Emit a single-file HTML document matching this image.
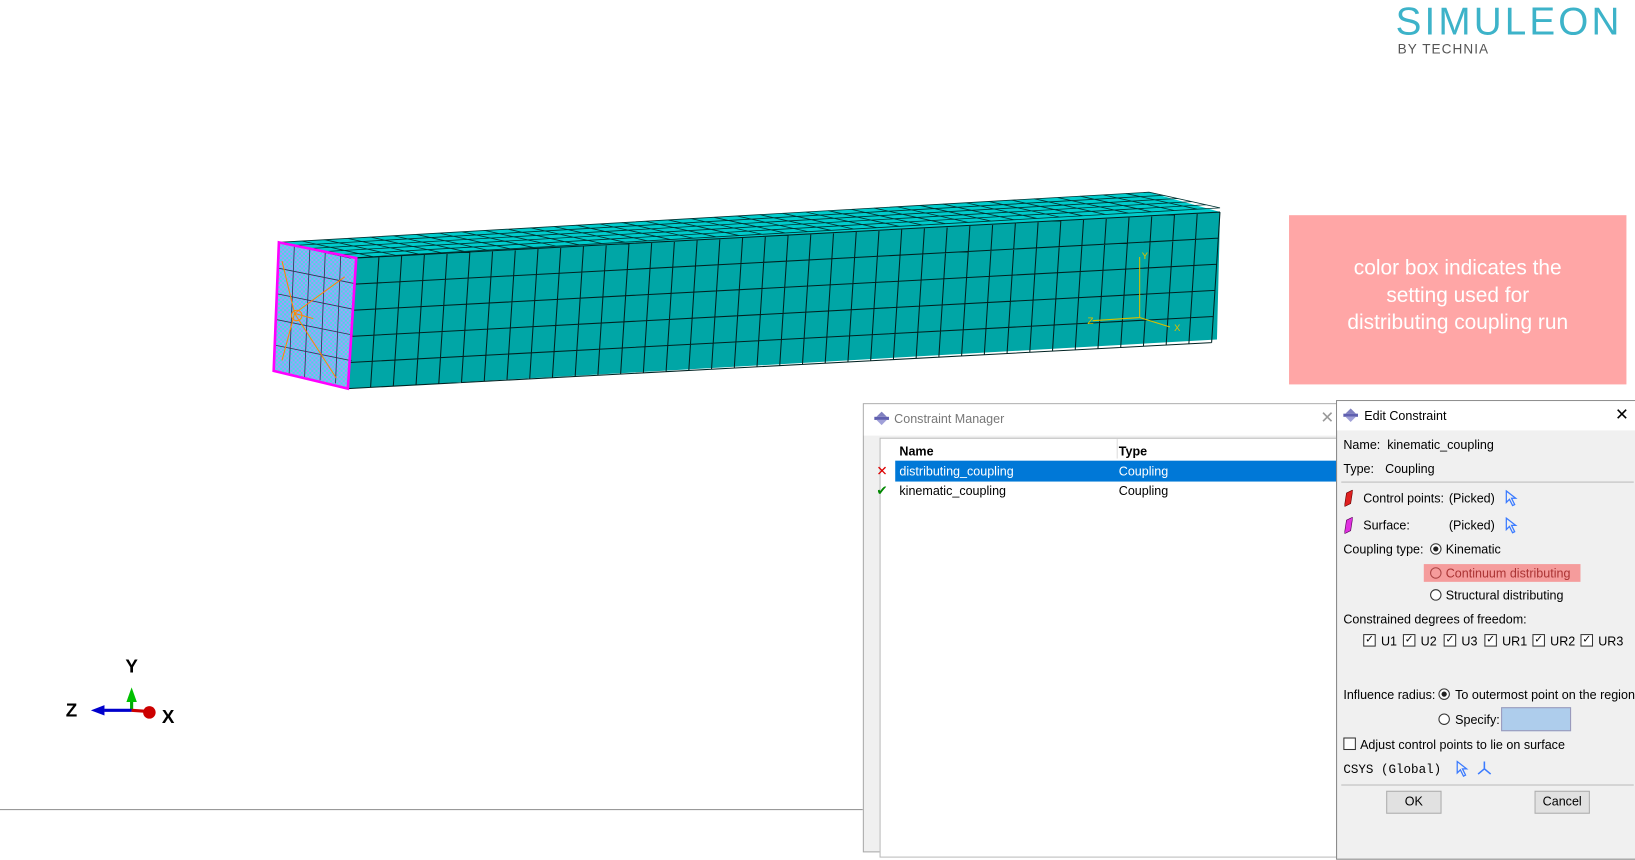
<!DOCTYPE html>
<html><head><meta charset="utf-8">
<style>
body{margin:0;width:1635px;height:810px;background:#fff;position:relative;overflow:hidden;font-family:"Liberation Sans",sans-serif;font-size:12px;color:#000}
#w{position:absolute;left:0;top:0;width:1566px;height:776px;transform:scale(1.0446);transform-origin:0 0}
.a{position:absolute;white-space:nowrap}
.rad{position:absolute;width:11px;height:11px;border:1px solid #333;border-radius:50%;background:#fff;box-sizing:border-box}
.rad.on::after{content:"";position:absolute;left:2px;top:2px;width:5px;height:5px;border-radius:50%;background:#222}
.cb{position:absolute;width:12px;height:12px;border:1px solid #333;box-sizing:border-box;background:#fff;font-size:10px;line-height:10px;text-align:center}
.btn{position:absolute;border:1px solid #adadad;background:#e1e1e1;text-align:center;line-height:19px}
</style></head><body><div id="w">

<div class="a" style="left:1336px;top:0px;font-size:37px;color:#3db3c9;letter-spacing:3px">SIMULEON</div>
<div class="a" style="left:1338px;top:39px;font-size:13px;color:#555;letter-spacing:1px">BY TECHNIA</div>

<svg class="a" style="left:0;top:0" width="1600" height="800">
 <defs>
  <pattern id="chk" width="4" height="4" patternUnits="userSpaceOnUse"><rect width="4" height="4" fill="#b090ff"/><rect width="2" height="2" fill="#40e0e0"/><rect x="2" y="2" width="2" height="2" fill="#40e0e0"/></pattern>
 </defs>
 <polygon points="267,232 1100,184 1168,203 341,247" fill="#00cccc"/>
 <polygon points="341,247 1168,203 1165,325 333,372" fill="#00a6a6"/>
 <polygon points="267,232 341,247 333,372 262,355" fill="url(#chk)"/>
 <g transform="matrix(21.92,-1.263,13.6,3,267,232)" stroke="#003333" fill="none">
  <path vector-effect="non-scaling-stroke" stroke-width="0.8" d="M0 0V5M1 0V5M2 0V5M3 0V5M4 0V5M5 0V5M6 0V5M7 0V5M8 0V5M9 0V5M10 0V5M11 0V5M12 0V5M13 0V5M14 0V5M15 0V5M16 0V5M17 0V5M18 0V5M19 0V5M20 0V5M21 0V5M22 0V5M23 0V5M24 0V5M25 0V5M26 0V5M27 0V5M28 0V5M29 0V5M30 0V5M31 0V5M32 0V5M33 0V5M34 0V5M35 0V5M36 0V5M37 0V5M38 0V5M0 0H38M0 1H38M0 2H38M0 3H38M0 4H38M0 5H38"/>
 </g>
 <g transform="matrix(21.76,-1.158,-1.6,25,341,247)" stroke="#002222" fill="none">
  <path vector-effect="non-scaling-stroke" stroke-width="1" d="M0 0V5M1 0V5M2 0V5M3 0V5M4 0V5M5 0V5M6 0V5M7 0V5M8 0V5M9 0V5M10 0V5M11 0V5M12 0V5M13 0V5M14 0V5M15 0V5M16 0V5M17 0V5M18 0V5M19 0V5M20 0V5M21 0V5M22 0V5M23 0V5M24 0V5M25 0V5M26 0V5M27 0V5M28 0V5M29 0V5M30 0V5M31 0V5M32 0V5M33 0V5M34 0V5M35 0V5M36 0V5M37 0V5M38 0V5M0 0H38M0 1H38M0 2H38M0 3H38M0 4H38M0 5H38"/>
 </g>
 <g transform="matrix(14.8,3,-1,24.6,267,232)" stroke="#335" fill="none">
  <path vector-effect="non-scaling-stroke" stroke-width="0.8" d="M1 0V5M2 0V5M3 0V5M4 0V5M0 1H5M0 2H5M0 3H5M0 4H5"/>
 </g>
 <polygon points="267,232 341,247 333,372 262,355" fill="none" stroke="#ff00ff" stroke-width="2.5"/>
 <g stroke="#ff8800" stroke-width="1" fill="none">
  <path d="M282 300L270 250M282 300L330 265M282 300L270 345M282 300L322 362M282 300L300 305"/>
  <circle cx="284" cy="302" r="5"/>
 </g>
 <g stroke="#d8c000" stroke-width="1" fill="none">
  <path d="M1091 304V246M1091 304L1046 307M1091 304L1120 313"/>
 </g>
 <text x="1093" y="248" font-size="10" fill="#d8c000" font-family="Liberation Mono">Y</text>
 <text x="1041" y="310" font-size="10" fill="#d8c000" font-family="Liberation Mono">Z</text>
 <text x="1124" y="317" font-size="10" fill="#d8c000" font-family="Liberation Mono">X</text>

 <line x1="126" y1="680" x2="126" y2="670" stroke="#00aa00" stroke-width="3"/>
 <polygon points="121,672 131,672 126,658" fill="#00c000"/>
 <line x1="126" y1="680" x2="100" y2="680" stroke="#0000cc" stroke-width="3"/>
 <polygon points="100,675 100,685 87,680" fill="#0000cc"/>
 <line x1="126" y1="680" x2="140" y2="681" stroke="#cc0000" stroke-width="3"/>
 <circle cx="143" cy="682" r="6" fill="#cc0000"/>
 <text x="120" y="644" font-size="18" font-weight="bold" fill="#000">Y</text>
 <text x="63" y="686" font-size="18" font-weight="bold" fill="#000">Z</text>
 <text x="155" y="692" font-size="18" font-weight="bold" fill="#000">X</text>
 <line x1="0" y1="775" x2="826" y2="775" stroke="#999"/>
</svg>

<div class="a" style="left:1234px;top:206px;width:323px;height:162px;background:#ffa6a6;color:#fff;font-size:20px;text-align:center;line-height:26px;padding-top:38px;box-sizing:border-box;white-space:normal">color box indicates the<br>setting used for<br>distributing coupling run</div>

<div class="a" style="left:826px;top:386px;width:460px;height:430px;border:1px solid #aaa;background:#f0f0f0;box-sizing:border-box">
 <div class="a" style="left:0;top:0;width:458px;height:30px;background:#fff"></div>
 <svg class="a" style="left:9px;top:7px" width="16" height="14"><polygon points="8,0 13,5 3,5" fill="#8080c0"/><rect x="1" y="5" width="14" height="3" fill="#6060b0"/><polygon points="8,13 13,8 3,8" fill="#a0a0d8"/></svg>
 <div class="a" style="left:29px;top:7px;color:#777">Constraint Manager</div>
 <div class="a" style="left:437px;top:3px;font-size:16px;color:#999">✕</div>
 <div class="a" style="left:15px;top:32px;width:445px;height:400px;background:#fff;border:1px solid #bbb"></div>
 <div class="a" style="left:34px;top:38px;font-weight:bold">Name</div>
 <div class="a" style="left:244px;top:38px;font-weight:bold">Type</div>
 <div class="a" style="left:242px;top:33px;width:1px;height:19px;background:#ddd"></div>
 <div class="a" style="left:30px;top:54px;width:430px;height:20px;background:#0078d7"></div>
 <div class="a" style="left:12px;top:56px;color:#d00;font-size:13px">✕</div>
 <div class="a" style="left:34px;top:57px;color:#fff">distributing_coupling</div>
 <div class="a" style="left:244px;top:57px;color:#fff">Coupling</div>
 <div class="a" style="left:12px;top:75px;color:#080;font-size:13px">✔</div>
 <div class="a" style="left:34px;top:76px">kinematic_coupling</div>
 <div class="a" style="left:244px;top:76px">Coupling</div>
</div>

<div class="a" style="left:1279px;top:383px;width:289px;height:440px;border:1px solid #888;background:#f0f0f0;box-sizing:border-box">
 <div class="a" style="left:0;top:0;width:287px;height:28px;background:#fff"></div>
 <svg class="a" style="left:5px;top:7px" width="16" height="14"><polygon points="8,0 13,5 3,5" fill="#8080c0"/><rect x="1" y="5" width="14" height="3" fill="#6060b0"/><polygon points="8,13 13,8 3,8" fill="#a0a0d8"/></svg>
 <div class="a" style="left:26px;top:7px">Edit Constraint</div>
 <div class="a" style="left:266px;top:3px;font-size:16px">✕</div>
 <div class="a" style="left:6px;top:35px">Name:&nbsp;&nbsp;kinematic_coupling</div>
 <div class="a" style="left:6px;top:58px">Type:</div><div class="a" style="left:46px;top:58px">Coupling</div>
 <div class="a" style="left:4px;top:77px;width:280px;height:1px;background:#bbb"></div>
 <svg class="a" style="left:7px;top:85px" width="8" height="16"><polygon points="2,3 8,0 6,13 0,16" fill="#e02020" stroke="#600" stroke-width=".6"/></svg>
 <div class="a" style="left:25px;top:86px">Control points:</div><div class="a" style="left:107px;top:86px">(Picked)</div>
 <svg class="a" style="left:161px;top:85px" width="12" height="16"><path d="M1 1L1 12L4 9L7 15L9 14L6 8L10 8Z" fill="none" stroke="#3b7bff" stroke-width="1.2"/></svg>
 <svg class="a" style="left:7px;top:111px" width="8" height="16"><polygon points="2,3 8,0 6,13 0,16" fill="#e030e0" stroke="#505" stroke-width=".6"/></svg>
 <div class="a" style="left:25px;top:112px">Surface:</div><div class="a" style="left:107px;top:112px">(Picked)</div>
 <svg class="a" style="left:161px;top:111px" width="12" height="16"><path d="M1 1L1 12L4 9L7 15L9 14L6 8L10 8Z" fill="none" stroke="#3b7bff" stroke-width="1.2"/></svg>
 <div class="a" style="left:6px;top:135px">Coupling type:</div>
 <div class="rad on" style="left:89px;top:136px"></div><div class="a" style="left:104px;top:135px">Kinematic</div>
 <div class="a" style="left:83px;top:156px;width:150px;height:17px;background:#f59c9c"></div>
 <div class="rad" style="left:89px;top:159px;border-color:#a44;background:transparent"></div><div class="a" style="left:104px;top:158px;color:#a33">Continuum distributing</div>
 <div class="rad" style="left:89px;top:180px"></div><div class="a" style="left:104px;top:179px">Structural distributing</div>
 <div class="a" style="left:6px;top:202px">Constrained degrees of freedom:</div>
 <div class="cb" style="left:25px;top:223px">✓</div><div class="a" style="left:42px;top:223px">U1</div>
 <div class="cb" style="left:63px;top:223px">✓</div><div class="a" style="left:80px;top:223px">U2</div>
 <div class="cb" style="left:102px;top:223px">✓</div><div class="a" style="left:119px;top:223px">U3</div>
 <div class="cb" style="left:141px;top:223px">✓</div><div class="a" style="left:158px;top:223px">UR1</div>
 <div class="cb" style="left:187px;top:223px">✓</div><div class="a" style="left:204px;top:223px">UR2</div>
 <div class="cb" style="left:233px;top:223px">✓</div><div class="a" style="left:250px;top:223px">UR3</div>
 <div class="a" style="left:6px;top:274px">Influence radius:</div>
 <div class="rad on" style="left:97px;top:275px"></div><div class="a" style="left:113px;top:274px">To outermost point on the region</div>
 <div class="rad" style="left:97px;top:299px"></div><div class="a" style="left:113px;top:298px">Specify:</div>
 <div class="a" style="left:157px;top:293px;width:65px;height:21px;background:#aecdec;border:1px solid #99b"></div>
 <div class="cb" style="left:6px;top:322px"></div><div class="a" style="left:22px;top:322px">Adjust control points to lie on surface</div>
 <div class="a" style="left:6px;top:346px;font-family:'Liberation Mono',monospace">CSYS (Global)</div>
 <svg class="a" style="left:114px;top:344px" width="12" height="16"><path d="M1 1L1 12L4 9L7 15L9 14L6 8L10 8Z" fill="none" stroke="#3b7bff" stroke-width="1.2"/></svg>
 <svg class="a" style="left:134px;top:344px" width="14" height="14"><path d="M7 1V8M7 8L1 13M7 8L13 13" stroke="#3b7bff" stroke-width="1.5" fill="none"/></svg>
 <div class="a" style="left:4px;top:367px;width:280px;height:1px;background:#bbb"></div>
 <div class="btn" style="left:47px;top:373px;width:51px;height:20px">OK</div>
 <div class="btn" style="left:189px;top:373px;width:51px;height:20px">Cancel</div>
</div>
</div></body></html>
